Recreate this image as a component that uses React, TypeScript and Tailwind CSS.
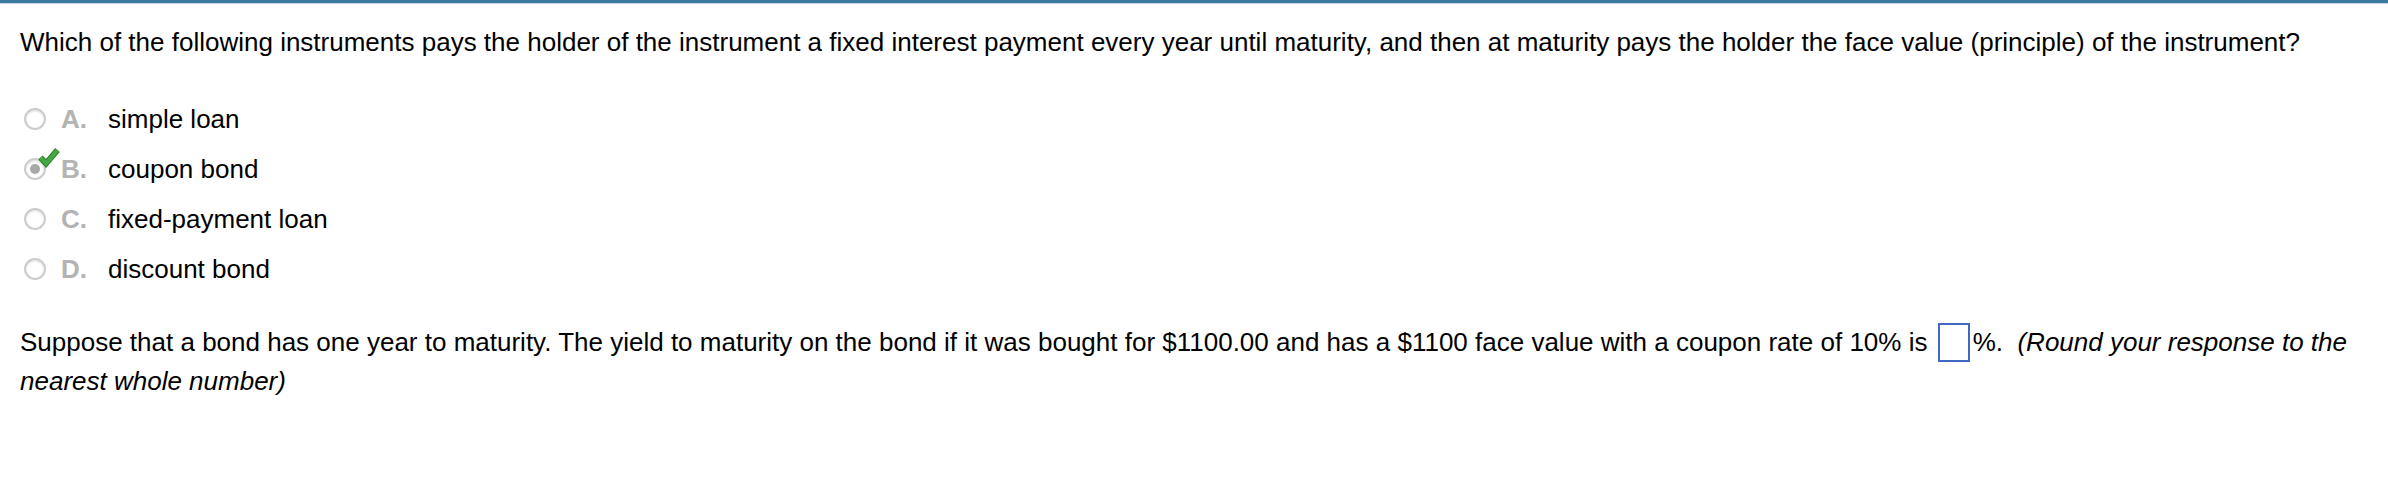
import React from "react";

const options = [
  { letter: "A.", text: "simple loan", selected: false },
  { letter: "B.", text: "coupon bond", selected: true },
  { letter: "C.", text: "fixed-payment loan", selected: false },
  { letter: "D.", text: "discount bond", selected: false },
];

function Radio({ selected }: { selected: boolean }) {
  return (
    <span className="relative inline-flex w-[22px] h-[22px] shrink-0 items-center justify-center rounded-full border-2 border-[#cccccc] bg-white shadow-[inset_0_1px_2px_rgba(0,0,0,0.15)]">
      {selected && <span className="block w-[10px] h-[10px] rounded-full bg-[#a9a9a9]" />}
      {selected && (
        <svg
          className="absolute left-[12px] top-[-13px]"
          width="22"
          height="21"
          viewBox="0 0 22 21"
        >
          <path
            d="M2.5 10.5 L8 16.5 L19.5 3"
            fill="none"
            stroke="#2f7f2f"
            strokeWidth="6"
            strokeLinejoin="miter"
          />
          <path
            d="M2.5 10.5 L8 16.5 L19.5 3"
            fill="none"
            stroke="#45a845"
            strokeWidth="4"
            strokeLinejoin="miter"
          />
        </svg>
      )}
    </span>
  );
}

export default function App() {
  return (
    <div className="w-full min-h-[498px] bg-white text-black font-['Liberation_Sans',Arial,sans-serif]">
      <div className="h-[3px] bg-[#3b79a0]" />
      <div className="h-[1px] bg-[#c9d5e0]" />
      <div className="pl-[20px] pr-[12px]">
        <p className="mt-[19px] text-[26px] leading-[38px]">
          Which of the following instruments pays the holder of the instrument a fixed interest payment every year until maturity, and then at maturity pays the holder the face value (principle) of the instrument?
        </p>
        <div className="mt-[33px] flex flex-col">
          {options.map((o) => (
            <div key={o.letter} className="flex h-[50px] items-center pl-[4px] text-[26px] leading-[50px]">
              <Radio selected={o.selected} />
              <span className="ml-[15px] w-[47px] shrink-0 font-bold text-[#b3b3b3]">{o.letter}</span>
              <span>{o.text}</span>
            </div>
          ))}
        </div>
        <p className="mt-[29px] text-[26px] leading-[38px]">
          Suppose that a bond has one year to maturity. The yield to maturity on the bond if it was bought for $1100.00 and has a $1100 face value with a coupon rate of 10% is{" "}
          <span className="ml-[3px] mr-[3px] inline-block w-[32px] h-[39px] align-[-11px] border-2 border-[#4169c2] bg-white" />
          %.{"\u00a0\u00a0"}
          <i>(Round your response to the nearest whole number)</i>
        </p>
      </div>
    </div>
  );
}
